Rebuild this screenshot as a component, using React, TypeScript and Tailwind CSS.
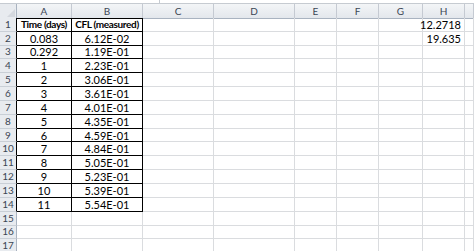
const cols = ["A", "B", "C", "D", "E", "F", "G", "H", ""];

const data: [string, string][] = [
  ["Time (days)", "CFL (measured)"],
  ["0.083", "6.12E-02"],
  ["0.292", "1.19E-01"],
  ["1", "2.23E-01"],
  ["2", "3.06E-01"],
  ["3", "3.61E-01"],
  ["4", "4.01E-01"],
  ["5", "4.35E-01"],
  ["6", "4.59E-01"],
  ["7", "4.84E-01"],
  ["8", "5.05E-01"],
  ["9", "5.23E-01"],
  ["10", "5.39E-01"],
  ["11", "5.54E-01"],
];

const colH: Record<number, string> = { 1: "12.2718", 2: "19.635" };

export default function App() {
  const rows = Array.from({ length: 17 }, (_, i) => i + 1);
  return (
    <div className="w-[474px] h-[251px] overflow-hidden bg-white font-['Lato','Liberation_Sans',sans-serif] text-[11px] text-black">
      {/* strip under the formula bar */}
      <div className="h-[4px] border-b border-[#c6cbd1] flex">
        <div className="w-[160px] border-r border-[#c6cbd1]" />
      </div>
      <div className="grid grid-cols-[17px_55px_71px_71px_81px_42px_42px_44px_42px_1fr] auto-rows-[13.85px]">
        {/* column header */}
        <div className="h-[15px] bg-[#e8ebef] border-r border-b border-[#a9b3c0] flex items-end justify-end pr-[1px] pb-[1px]">
          <div className="w-0 h-0 border-l-[8px] border-l-transparent border-b-[8px] border-b-[#d4d8de]" />
        </div>
        {cols.map((c, i) => (
          <div
            key={"h" + i}
            className={`h-[15px] bg-gradient-to-b from-[#f3f5f7] to-[#e3e7ec] border-r border-[#c5cad2] border-b flex items-center justify-center text-[10px] text-[#3b4654] ${
              i < 2 ? "border-b-black" : "border-b-[#a9b3c0]"
            }`}
          >
            {c}
          </div>
        ))}
        {rows.map((r) => {
          const inTable = r <= 14;
          const d = inTable ? data[r - 1] : null;
          return [
            <div
              key={"r" + r}
              className={`bg-[#e8ebef] border-r border-b border-b-[#c9cfd6] flex items-center justify-center text-[10px] text-[#3b4654] ${
                inTable ? "border-r-black" : "border-r-[#a9b3c0]"
              }`}
            >
              {r}
            </div>,
            ...cols.map((_, ci) => {
              const tableCell = inTable && ci < 2;
              let txt = "";
              if (tableCell && d) txt = d[ci];
              if (ci === 7 && colH[r]) txt = colH[r];
              return (
                <div
                  key={r + "-" + ci}
                  className={`border-r border-b flex items-center leading-none whitespace-nowrap ${
                    tableCell ? "border-black justify-center" : "border-[#dadcdf]"
                  } ${r === 14 && ci < 2 ? "border-b-black" : ""} ${
                    ci === 7 ? "justify-end pr-[3px]" : ""
                  } ${r === 1 && ci < 2 ? "font-bold text-[10px] tracking-[-0.35px]" : ""}`}
                >
                  {txt}
                </div>
              );
            }),
          ];
        })}
      </div>
    </div>
  );
}
